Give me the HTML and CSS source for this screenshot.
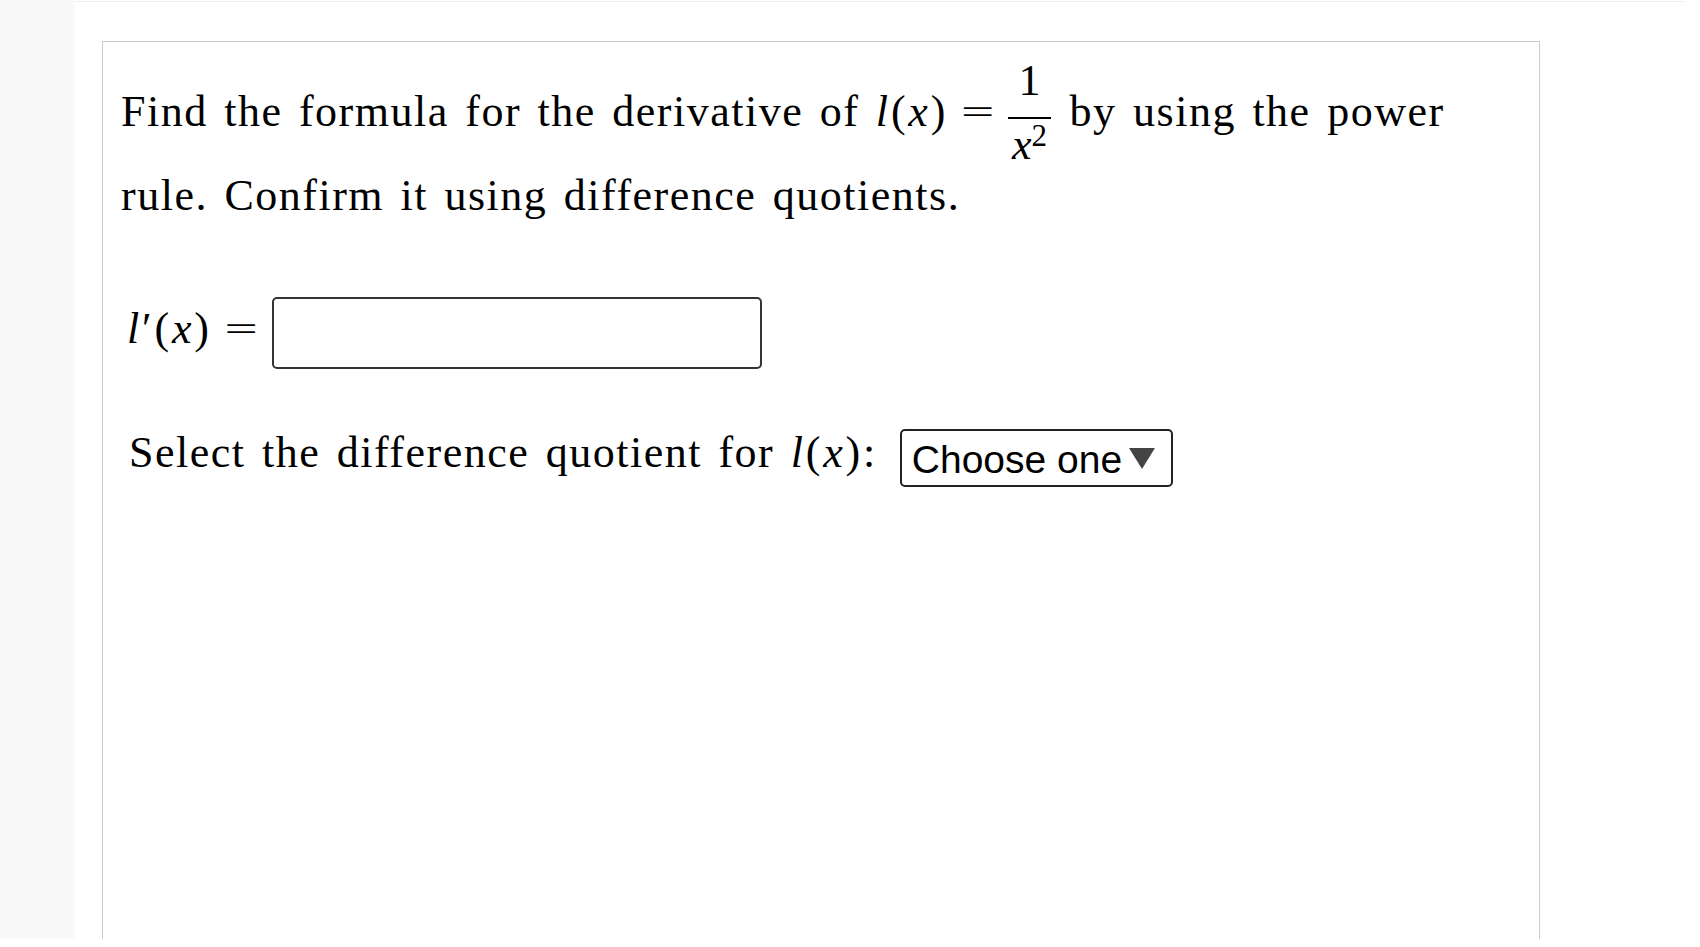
FILE: index.html
```html
<!DOCTYPE html>
<html lang="en">
<head>
<meta charset="utf-8">
<title>Power rule question</title>
<link rel="stylesheet" href="styles.css">
</head>
<body>
<div class="page">
  <aside class="sidebar"></aside>
  <main class="main">
    <section class="card">
      <div class="prompt">
        <div class="line line-first">Find the formula for the derivative of <span class="math"><i>l</i>(<i>x</i>)<span class="eq">=</span><span class="frac"><span class="num">1</span><span class="den"><i>x</i><sup>2</sup></span></span></span> by using the power</div>
        <div class="line">rule. Confirm it using difference quotients.</div>
      </div>
      <div class="row answer">
        <span class="lbl math"><i>l</i>′(<i>x</i>)<span class="eq">=</span></span>
        <input class="box" type="text" aria-label="l prime of x">
      </div>
      <div class="row choose">
        <span class="lbl">Select the difference quotient for <span class="math"><i>l</i>(<i>x</i>)</span>:</span>
        <div class="select"><span class="opt">Choose one</span><span class="tri"></span></div>
      </div>
    </section>
  </main>
</div>
</body>
</html>
```

FILE: styles.css
```css
html, body {
  margin: 0;
  padding: 0;
  background: #ffffff;
}

.page {
  display: flex;
  height: 939px;
  overflow: hidden;
}

.sidebar {
  width: 75px;
  flex: none;
  background: #f9f9f9;
}

.main {
  width: 1609px;
  flex: none;
  margin-top: 1px;
  border-top: 1px solid #eeeeee;
}

.card {
  margin: 39px 0 0 27px;
  width: 1438px;
  height: 1000px;
  border: 1px solid #cccccc;
  border-bottom: none;
  padding: 24px 0 0 18px;
  box-sizing: border-box;
  font-family: "Liberation Serif", "Times New Roman", serif;
  font-size: 44px;
  letter-spacing: 1.5px;
  word-spacing: 4px;
  color: #000;
}

.line {
  line-height: 81px;
  white-space: nowrap;
}

.math {
  letter-spacing: 2.8px;
}

.math i {
  font-style: italic;
}

.eq {
  font-family: "DejaVu Sans", sans-serif;
  font-weight: 200;
  letter-spacing: 0;
  margin: 0 12px 0 11px;
}

.frac {
  display: inline-block;
  vertical-align: -33px;
  margin: 0 2px -16px 0;
  text-align: center;
  line-height: 30px;
  letter-spacing: 0;
}

.num {
  display: block;
  line-height: 30px;
  padding-bottom: 21px;
}

.den {
  display: block;
  line-height: 52px;
  border-top: 2px solid #000;
  padding: 0 4px;
}

.den sup {
  font-size: 31px;
  line-height: 0;
  vertical-align: 13px;
}

.row {
  display: flex;
  align-items: center;
  padding-left: 8px;
  white-space: nowrap;
}

.lbl {
  line-height: 44px;
  padding-bottom: 10px;
}

.answer {
  margin-top: 61px;
  padding-left: 6px;
}

.answer .eq {
  margin: 0 12px 0 11px;
}

.box {
  width: 490px;
  height: 72px;
  box-sizing: border-box;
  border: 2px solid #333;
  border-radius: 5px;
  margin: 0;
  padding: 0;
  background: #fff;
}

.choose {
  margin-top: 60px;
}

.select {
  margin-left: 23px;
  width: 273px;
  height: 58px;
  box-sizing: border-box;
  border: 2px solid #222;
  border-radius: 5px;
  display: flex;
  align-items: center;
  padding: 0 0 0 10px;
  font-family: "Liberation Sans", Arial, sans-serif;
  font-size: 39px;
  letter-spacing: 0;
  word-spacing: 0;
  color: #000;
}

.opt {
  line-height: 1;
  padding-top: 2px;
}

.tri {
  width: 0;
  height: 0;
  margin-left: 7px;
  border-left: 13px solid transparent;
  border-right: 13px solid transparent;
  border-top: 21px solid #444;
}
```
